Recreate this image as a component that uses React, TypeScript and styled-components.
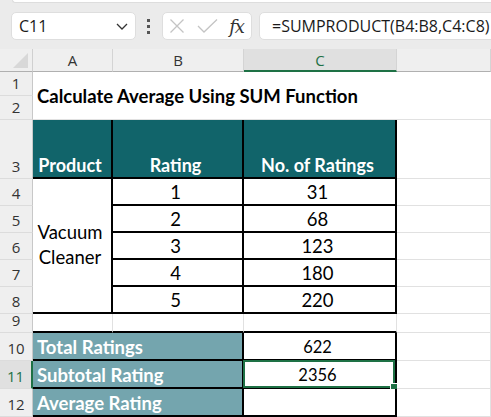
import React from 'react';
import styled, { createGlobalStyle, css } from 'styled-components';

const GlobalStyle = createGlobalStyle`
  html, body {
    margin: 0;
    padding: 0;
    background: #ffffff;
  }
  body {
    font-family: 'Lato', 'Liberation Sans', sans-serif;
  }
`;

const GREEN = '#1e7145';
const GRID = '#e1e1e1';

const Window = styled.div`
  width: 491px;
  height: 417px;
  overflow: hidden;
  background: #ebebeb;
  display: flex;
  flex-direction: column;
`;

const RibbonEdge = styled.div`
  height: 2px;
  margin-left: 12px;
  background: #ffffff;
  border-bottom: 1px solid #dddddd;
  border-left: 1px solid #dddddd;
  border-bottom-left-radius: 5px;
`;

const FormulaBar = styled.div`
  height: 46px;
  display: flex;
  align-items: center;
  padding-left: 11px;
  box-sizing: border-box;
  font-family: 'Open Sans', 'Noto Sans', sans-serif;
`;

const Box = styled.div`
  height: 28px;
  box-sizing: border-box;
  background: #ffffff;
  border: 1px solid #dedede;
  border-radius: 5px;
  display: flex;
  align-items: center;
`;

const NameBox = styled(Box)`
  width: 125px;
  padding: 0 7px 0 7px;
  justify-content: space-between;
  font-size: 16px;
  color: #1a1a1a;
`;

const Dots = styled.div`
  width: 4px;
  margin: 0 11px 0 11px;
  display: flex;
  flex-direction: column;
  gap: 3px;
  span {
    width: 3px;
    height: 3px;
    background: #555555;
  }
`;

const FxBox = styled(Box)`
  width: 90px;
  padding: 0 5px 0 6px;
  justify-content: space-between;
`;

const Fx = styled.span`
  font-family: 'DejaVu Serif', 'Liberation Serif', serif;
  font-style: italic;
  font-size: 18px;
  color: #333333;
  letter-spacing: -1px;
  padding-right: 2px;
`;

const FormulaInput = styled(Box)`
  flex: 1;
  margin-left: 7px;
  margin-right: -8px;
  padding-left: 12px;
  font-size: 16px;
  color: #1a1a1a;
  white-space: nowrap;
`;

const Sheet = styled.div`
  flex: 1;
  display: grid;
  grid-template-columns: 33px 80px 131px 153px 1fr;
  grid-template-rows: 23px 24px 24px 59px repeat(5, 27px) 19px 28px 28px 28px;
  background: #ffffff;
`;

type Line = 'grid' | 'black' | 'none';

const edge = (l: Line) =>
  l === 'black' ? `2px solid #000000` : l === 'grid' ? `1px solid ${GRID}` : 'none';

const Cell = styled.div<{
  $col: string;
  $row: string;
  $fill?: string;
  $right?: Line;
  $bottom?: Line;
  $align?: 'left' | 'center';
  $valign?: 'end' | 'center';
  $bold?: boolean;
  $size?: number;
  $pad?: number;
  $light?: boolean;
}>`
  grid-column: ${p => p.$col};
  grid-row: ${p => p.$row};
  position: relative;
  box-sizing: border-box;
  display: flex;
  justify-content: ${p => (p.$align === 'left' ? 'flex-start' : 'center')};
  align-items: ${p => (p.$valign === 'center' ? 'center' : 'flex-end')};
  text-align: ${p => (p.$align === 'left' ? 'left' : 'center')};
  padding: 0 4px ${p => p.$pad ?? 2}px ${p => (p.$align === 'left' ? 4 : 0)}px;
  background: ${p => p.$fill ?? '#ffffff'};
  border-right: ${p => edge(p.$right ?? 'grid')};
  border-bottom: ${p => edge(p.$bottom ?? 'grid')};
  font-size: ${p => p.$size ?? 18}px;
  font-weight: ${p => (p.$bold ? 700 : 400)};
  color: ${p => (p.$light ? '#ffffff' : '#000000')};
  line-height: 22px;
  white-space: nowrap;
`;

const Selected = styled.div`
  position: absolute;
  top: -1px;
  left: -1px;
  right: 0;
  bottom: -1px;
  border: 2px solid ${GREEN};
  pointer-events: none;

  &::after {
    content: '';
    position: absolute;
    right: -4px;
    bottom: -4px;
    width: 6px;
    height: 6px;
    background: ${GREEN};
    box-shadow: 0 0 0 1px #ffffff;
  }
`;

const Corner = styled.div`
  grid-column: 1;
  grid-row: 1;
  background: #efefef;
  border-right: 1px solid #d0d0d0;
  border-bottom: 1px solid #b0b0b0;
  box-sizing: border-box;
  position: relative;

  &::after {
    content: '';
    position: absolute;
    right: 4px;
    bottom: 3px;
    width: 0;
    height: 0;
    border-left: 15px solid transparent;
    border-bottom: 15px solid #d8d8d8;
  }
`;

const ColHead = styled.div<{ $col: number; $selected?: boolean }>`
  grid-column: ${p => p.$col};
  grid-row: 1;
  box-sizing: border-box;
  display: flex;
  align-items: center;
  justify-content: center;
  background: #efefef;
  border-right: 1px solid #d4d4d4;
  border-bottom: 1px solid #b0b0b0;
  font-family: 'Open Sans', 'Noto Sans', sans-serif;
  font-size: 15px;
  color: #333333;
  ${p =>
    p.$selected &&
    css`
      background: #e0e0e0;
      color: ${GREEN};
      border-bottom: 2px solid ${GREEN};
      padding-top: 1px;
    `}
`;

const RowHead = styled.div<{ $row: string; $selected?: boolean }>`
  grid-column: 1;
  grid-row: ${p => p.$row};
  box-sizing: border-box;
  display: flex;
  align-items: flex-end;
  justify-content: center;
  padding-bottom: 1px;
  background: #efefef;
  border-right: 1px solid #c8c8c8;
  border-bottom: 1px solid #dcdcdc;
  font-family: 'Open Sans', 'Noto Sans', sans-serif;
  font-size: 15px;
  line-height: 22px;
  color: #333333;
  ${p =>
    p.$selected &&
    css`
      background: #e0e0e0;
      color: ${GREEN};
      border-right: 2px solid ${GREEN};
    `}
`;

const CloseIcon = () => (
  <svg width="16" height="14" viewBox="0 0 16 14">
    <path d="M1.5 0.5 L14.5 13.5 M14.5 0.5 L1.5 13.5" stroke="#c4c4c4" strokeWidth="1.3" fill="none" />
  </svg>
);

const CheckIcon = () => (
  <svg width="21" height="14" viewBox="0 0 21 14">
    <path d="M1 7 L7 13 L20 0.5" stroke="#c4c4c4" strokeWidth="1.3" fill="none" />
  </svg>
);

const Chevron = () => (
  <svg width="12" height="7" viewBox="0 0 12 7">
    <path d="M1 1 L6 6 L11 1" stroke="#333333" strokeWidth="1.3" fill="none" />
  </svg>
);

const TEAL = '#11646a';
const SOFT_TEAL = '#74a5ae';

const ratings = [
  { rating: 1, count: 31 },
  { rating: 2, count: 68 },
  { rating: 3, count: 123 },
  { rating: 4, count: 180 },
  { rating: 5, count: 220 },
];

const summary = [
  { label: 'Total Ratings', value: '622' },
  { label: 'Subtotal Rating', value: '2356' },
  { label: 'Average Rating', value: '' },
];

const App: React.FC = () => {
  return (
    <>
      <GlobalStyle />
      <Window>
        <RibbonEdge />
        <FormulaBar>
          <NameBox>
            <span>C11</span>
            <Chevron />
          </NameBox>
          <Dots>
            <span />
            <span />
            <span />
          </Dots>
          <FxBox>
            <CloseIcon />
            <CheckIcon />
            <Fx>fx</Fx>
          </FxBox>
          <FormulaInput>=SUMPRODUCT(B4:B8,C4:C8)</FormulaInput>
        </FormulaBar>

        <Sheet>
          <Corner />
          <ColHead $col={2}>A</ColHead>
          <ColHead $col={3}>B</ColHead>
          <ColHead $col={4} $selected>C</ColHead>
          <ColHead $col={5} />

          {Array.from({ length: 12 }, (_, i) => (
            <RowHead key={i} $row={String(i + 2)} $selected={i + 1 === 11}>
              {i + 1}
            </RowHead>
          ))}

          {/* rows 1-2: title */}
          <Cell $col="2 / 6" $row="2 / 4" $align="left" $valign="center" $bold $size={18.5} $right="none" style={{ paddingTop: 2 }}>
            Calculate Average Using SUM Function
          </Cell>

          {/* row 3: table header */}
          <Cell $col="2" $row="4" $fill={TEAL} $right="black" $bottom="black" $bold $light $pad={1}>
            Product
          </Cell>
          <Cell $col="3" $row="4" $fill={TEAL} $right="black" $bottom="black" $bold $light $pad={1}>
            Rating
          </Cell>
          <Cell $col="4" $row="4" $fill={TEAL} $right="black" $bottom="black" $bold $light $pad={1}>
            No. of Ratings
          </Cell>
          <Cell $col="5" $row="4" />

          {/* rows 4-8 */}
          <Cell $col="2" $row="5 / 10" $right="black" $bottom="black" $valign="center" $size={18.5} style={{ lineHeight: '25px' }}>
            Vacuum
            <br />
            Cleaner
          </Cell>
          {ratings.map((r, i) => (
            <React.Fragment key={r.rating}>
              <Cell $col="3" $row={String(i + 5)} $right="black" $bottom="black" $size={18.5} $pad={1}>
                {r.rating}
              </Cell>
              <Cell $col="4" $row={String(i + 5)} $right="black" $bottom="black" $size={18.5} $pad={1}>
                {r.count}
              </Cell>
              <Cell $col="5" $row={String(i + 5)} />
            </React.Fragment>
          ))}

          {/* row 9 */}
          <Cell $col="2" $row="10" $bottom="black" />
          <Cell $col="3" $row="10" $bottom="black" />
          <Cell $col="4" $row="10" $bottom="black" />
          <Cell $col="5" $row="10" />

          {/* rows 10-12 */}
          {summary.map((s, i) => (
            <React.Fragment key={s.label}>
              <Cell
                $col="2 / 4"
                $row={String(i + 11)}
                $fill={SOFT_TEAL}
                $right="black"
                $bottom="black"
                $align="left"
                $bold
                $light
                $size={18.5}
                $pad={1}
              >
                {s.label}
              </Cell>
              <Cell $col="4" $row={String(i + 11)} $right="black" $bottom="black" $size={16.5} $pad={1}>
                {s.value}
                {i === 1 && <Selected />}
              </Cell>
              <Cell $col="5" $row={String(i + 11)} />
            </React.Fragment>
          ))}
        </Sheet>
      </Window>
    </>
  );
};

export default App;
